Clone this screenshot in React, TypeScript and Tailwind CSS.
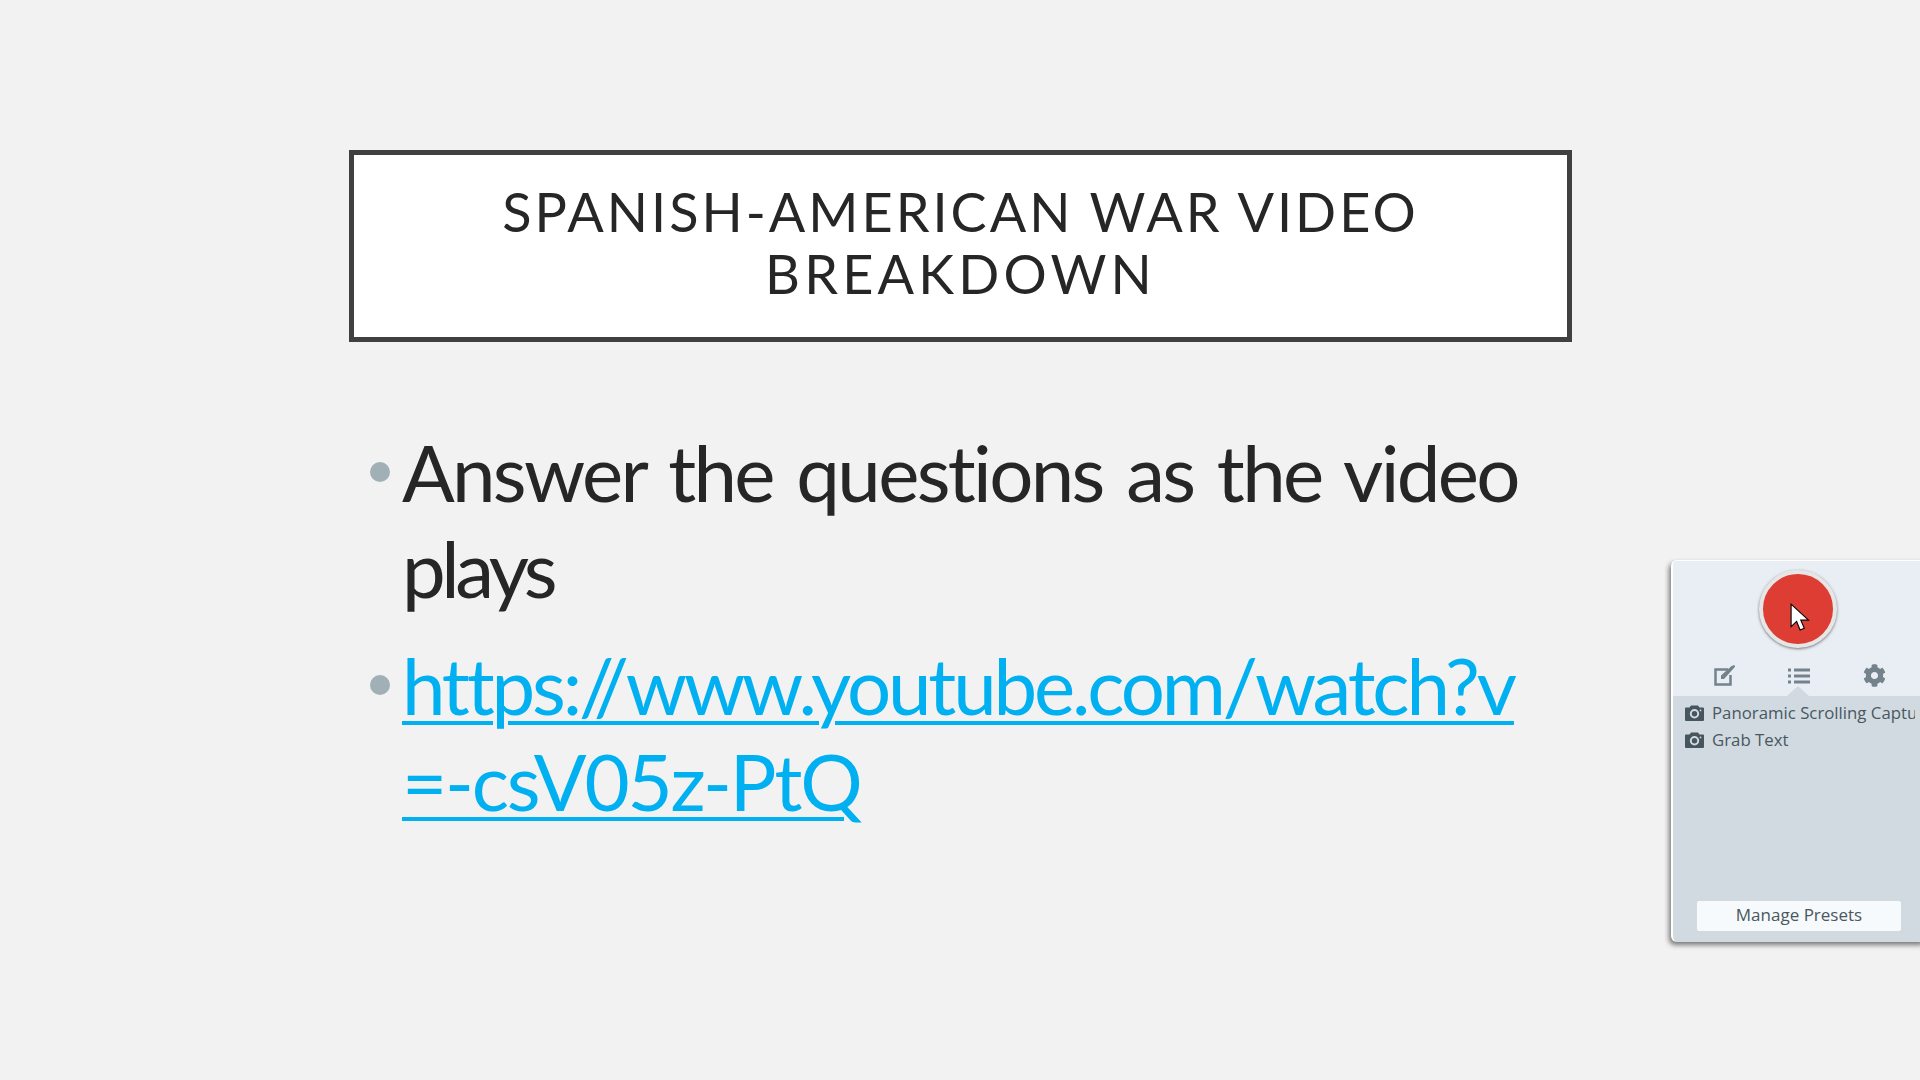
import { FaCog } from 'react-icons/fa'

function CameraIcon() {
  return (
    <svg width="19" height="16" viewBox="0 0 19 16" className="shrink-0">
      <path
        fill="#47555e"
        fillRule="evenodd"
        d="M1 2.500h3.500L6 .5h7l1.500 2H18a1 1 0 0 1 1 1V15a1 1 0 0 1-1 1H1a1 1 0 0 1-1-1V3.500a1 1 0 0 1 1-1ZM9.500 4a4.700 4.700 0 1 0 0 9.400 4.700 4.700 0 0 0 0-9.400Zm0 2a2.700 2.700 0 1 1 0 5.400 2.700 2.700 0 0 1 0-5.400ZM15.500 4.500a.9.9 0 1 0 0 1.800.9.9 0 0 0 0-1.800Z"
      />
    </svg>
  )
}

function EditIcon() {
  return (
    <svg width="21" height="21" viewBox="0 0 21 21">
      <path fill="none" stroke="#74828c" strokeWidth="2.500" d="M14 4.500H1.500v15h15V10" />
      <path fill="#74828c" d="M7 10.500 17.500 1 20.500 0 21 1.500 20 3 10 14H7Z" />
    </svg>
  )
}

function ListIcon() {
  return (
    <svg width="22" height="16" viewBox="0 0 22 16">
      <g fill="#74828c">
        <rect x="0" y="0.500" width="3" height="3" />
        <rect x="0" y="6.500" width="3" height="3" />
        <rect x="0" y="12.500" width="3" height="3" />
        <rect x="6" y="0.500" width="16" height="3" />
        <rect x="6" y="6.500" width="16" height="3" />
        <rect x="6" y="12.500" width="16" height="3" />
      </g>
    </svg>
  )
}

function Cursor() {
  return (
    <svg width="22" height="31" viewBox="0 0 20 28" className="absolute left-[27px] top-[29px]">
      <path
        fill="#fff"
        stroke="#000"
        strokeWidth="1"
        d="M1 1v20.500l5-4.800 3.200 7.800 3.800-1.600-3.200-7.400h7Z"
      />
    </svg>
  )
}

function PresetRow({ label }: { label: string }) {
  return (
    <div className="flex h-[27px] items-center gap-[8px] pl-[12px] whitespace-nowrap">
      <CameraIcon />
      <span>{label}</span>
    </div>
  )
}

export default function App() {
  return (
    <div className="relative h-[1080px] w-[1920px] overflow-hidden bg-[#f2f2f2] font-['Lato',sans-serif] text-[#262626]">
      {/* Slide title */}
      <div className="ml-[349px] pt-[150px]">
        <div className="flex h-[192px] w-[1223px] flex-col items-center border-[5px] border-[#404040] bg-white pt-[26px] text-[54px] leading-[61.500px] tracking-[3px]">
          <div>SPANISH-AMERICAN WAR VIDEO</div>
          <div className="tracking-[4.200px]">BREAKDOWN</div>
        </div>
      </div>

      {/* Bullets */}
      <div className="mt-[82px] ml-[370px] flex flex-col gap-[21px] text-[78px] leading-[96px]">
        <div className="flex">
          <span className="mt-[38px] mr-[12px] h-[20px] w-[20px] shrink-0 rounded-full bg-[#a0b0b6]" />
          <div>
            <div className="tracking-[-2.650px] [word-spacing:6.100px]">Answer the questions as the video</div>
            <div className="tracking-[-4.400px]">plays</div>
          </div>
        </div>
        <div className="flex">
          <span className="mt-[38px] mr-[12px] h-[20px] w-[20px] shrink-0 rounded-full bg-[#a0b0b6]" />
          <div className="text-[#00b0f0] underline decoration-[4px] underline-offset-[6px]">
            <div className="tracking-[-3.140px]">https://www.youtube.com/watch?v</div>
            <div className="tracking-[-2.200px]">=-csV05z-PtQ</div>
          </div>
        </div>
      </div>

      {/* Capture widget */}
      <div className="absolute top-[560px] left-[1671px] flex h-[382px] w-[254px] flex-col overflow-hidden rounded-tl-[6px] rounded-bl-[6px] border-t border-l-2 border-white bg-[#d0dae0] font-['Open_Sans',sans-serif] text-[16.800px] text-[#4a5760] shadow-[-2px_3px_5px_rgba(0,0,0,0.5)]">
        <div className="relative h-[135px] shrink-0 bg-[#e8eef4]">
          <div className="absolute top-[9px] left-[86px] h-[78px] w-[78px] rounded-full border-[4px] border-[#e6e6e6] bg-[#dd3d33] shadow-[0_1px_3px_rgba(0,0,0,0.5)]">
            <Cursor />
          </div>
          <div className="absolute top-[103px] left-[41px] flex w-[172px] items-center justify-between">
            <EditIcon />
            <ListIcon />
            <FaCog className="text-[23px] text-[#74828c]" />
          </div>
          <div className="absolute bottom-0 left-[114px] h-0 w-0 border-x-[11px] border-b-[10px] border-x-transparent border-b-[#d0dae0]" />
        </div>
        <div className="flex flex-1 flex-col justify-between pb-[11px]">
          <div className="pt-[3px] pr-[10px]">
            <div className="overflow-hidden">
              <PresetRow label="Panoramic Scrolling Capture" />
            </div>
            <PresetRow label="Grab Text" />
          </div>
          <div className="mx-auto flex h-[30px] w-[204px] items-center justify-center rounded-[2px] bg-[#f6fafc] pb-[2px] text-[17px]">
            Manage Presets
          </div>
        </div>
      </div>
    </div>
  )
}
